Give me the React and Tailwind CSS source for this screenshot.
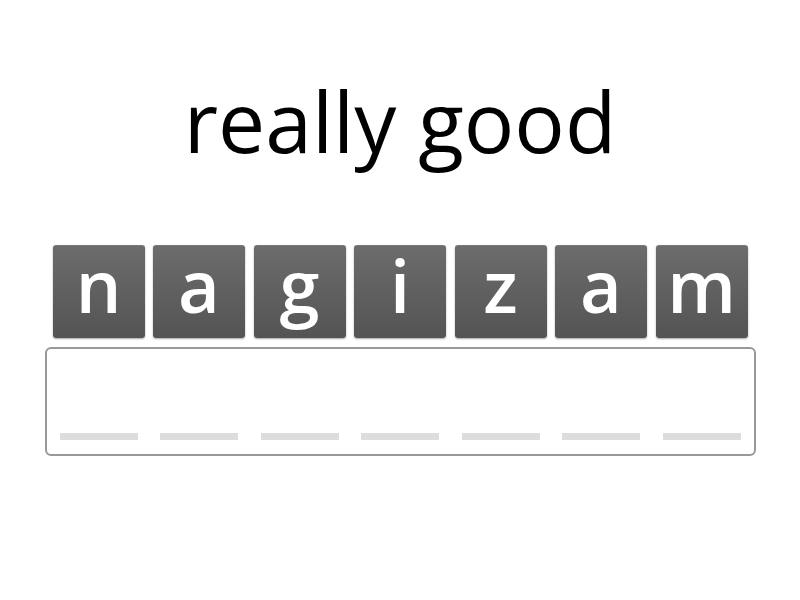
const letters = ['n', 'a', 'g', 'i', 'z', 'a', 'm']

export default function App() {
  return (
    <div className="w-[800px] h-[600px] bg-white flex flex-col items-center" style={{ fontFamily: '"Open Sans", sans-serif' }}>
      {/* Title */}
      <div className="mt-[66px] h-[110px] flex items-center justify-center text-[84px] leading-none text-black">
        really good
      </div>

      {/* Letter tiles */}
      <div className="mt-[69px] flex gap-[8.5px]">
        {letters.map((l, i) => (
          <div
            key={i}
            className="w-[92px] h-[93px] rounded-[3px] bg-gradient-to-b from-[#6c6c6c] to-[#545454] border-t border-[#7a7a7a] shadow-[0_1px_2px_rgba(0,0,0,0.35)] flex items-center justify-center text-white text-[72px] font-semibold leading-none pb-[15px]"
          >
            {l}
          </div>
        ))}
      </div>

      {/* Answer box */}
      <div className="mt-[9px] w-[711px] h-[109px] border-2 border-[#999] rounded-[6px] px-[13px] flex items-end pb-[14px] gap-[22.5px]">
        {letters.map((_, i) => (
          <div key={i} className="w-[78px] h-[7px] bg-[#dddddd]" />
        ))}
      </div>
    </div>
  )
}
